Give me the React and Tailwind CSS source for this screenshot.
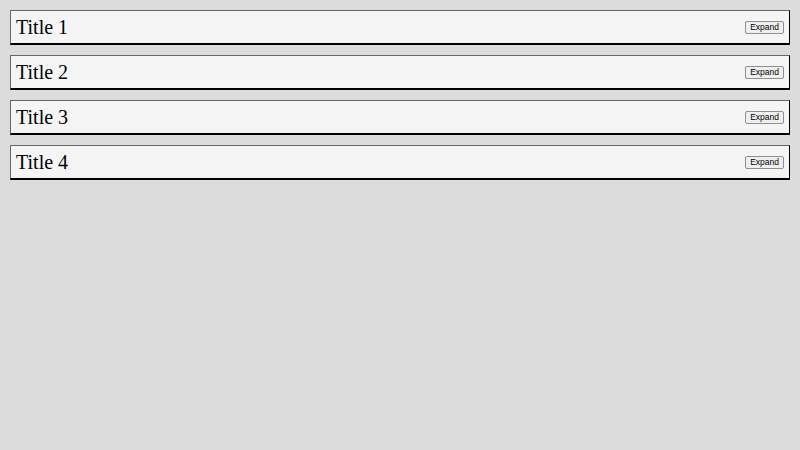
export default function App() {
  const items = ["Title 1", "Title 2", "Title 3", "Title 4"]

  return (
    <div className="min-h-[450px] bg-[#dcdcdc] p-[10px] flex flex-col gap-[10px]">
      {items.map((title) => (
        <div
          key={title}
          className="h-[35px] flex items-center justify-between bg-[#f5f5f5] border border-t-[#666] border-l-[#666] border-r-black border-b-2 border-b-black pl-[5px] pr-[5px]"
        >
          <span className="text-[20px] leading-none text-black font-['Liberation_Serif',serif]">{title}</span>
          <button className="h-[13px] text-[8.5px] leading-none px-[4px] bg-[#efefef] border border-[#8f8f8f] rounded-[2px] text-black font-['Liberation_Sans',sans-serif]">
            Expand
          </button>
        </div>
      ))}
    </div>
  )
}
